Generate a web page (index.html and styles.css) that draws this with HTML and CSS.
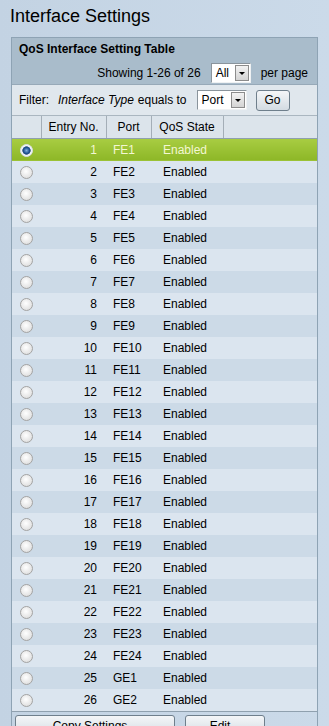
FILE: index.html
```html
<!DOCTYPE html>
<html>
	<head>
		<meta http-equiv="content-type" content="text/html; charset=utf-8" />
		<title>Interface Settings</title>
		<link rel="stylesheet" href="styles.css">
	</head>

	<body>
		<h1 class="page-title">Interface Settings</h1>

		<div class="panel">
			<div class="panel-head">
				<div class="panel-caption">QoS Interface Setting Table</div>
				<div class="paging">
					<span>Showing 1-26 of 26</span>
					<span class="select select-all"><span class="select-value">All</span><span class="select-arrow"></span></span>
					<span>per page</span>
				</div>
			</div>

			<div class="filter-bar">
				<span class="filter-label">Filter:</span>
				<span class="filter-field">Interface Type</span>
				<span>equals to</span>
				<span class="select select-port"><span class="select-value">Port</span><span class="select-arrow"></span></span>
				<button class="btn btn-go">Go</button>
			</div>

			<table class="qos-table">
				<thead>
					<tr>
						<th class="col-radio"></th>
						<th class="col-entry">Entry No.</th>
						<th class="col-port">Port</th>
						<th class="col-state">QoS State</th>
						<th class="col-rest"></th>
					</tr>
				</thead>
				<tbody id="qos-rows"></tbody>
			</table>

			<div class="actions">
				<button class="btn btn-copy">Copy Settings...</button>
				<button class="btn btn-edit">Edit...</button>
			</div>
		</div>

		<script type="text/javascript">
			"use strict";

			let rows = document.getElementById("qos-rows");
			let html = "";

			for (let i = 1; i <= 26; i++) {
				// FE1..FE24, then the two gigabit ports
				let port = i <= 24 ? "FE" + i : "GE" + (i - 24);
				let cls = i == 1 ? "selected" : (i % 2 == 0 ? "even" : "odd");

				html += '<tr class="' + cls + '">' +
				        '<td class="col-radio"><span class="radio"></span></td>' +
				        '<td class="col-entry">' + i + '</td>' +
				        '<td class="col-port">' + port + '</td>' +
				        '<td class="col-state">Enabled</td>' +
				        '<td class="col-rest"></td>' +
				        '</tr>';
			}

			rows.innerHTML = html;
		</script>
	</body>
</html>
```

FILE: styles.css
```css
body {
	margin: 0;
	height: 726px;
	overflow: hidden;
	background: linear-gradient(to right, #c3d3e3, #cbdae9);
	font-family: "Liberation Sans", Arial, sans-serif;
	font-size: 12px;
	color: #000;
}

.page-title {
	margin: 6px 0 0 10px;
	font-size: 18px;
	font-weight: normal;
	line-height: 21px;
}

.panel {
	margin: 10px 0 0 11px;
	width: 305px;
	border: 1px solid #8ea3b4;
	border-bottom: none;
}

/* caption + paging */
.panel-head {
	height: 47px;
	padding: 0 9px 0 7px;
	background: #a9bccb;
	box-sizing: border-box;
	border-bottom: 1px solid #97a9b8;
}

.panel-caption {
	padding-top: 4px;
	font-weight: bold;
	line-height: 14px;
}

.paging {
	display: flex;
	justify-content: flex-end;
	align-items: center;
	gap: 10px;
	margin-top: 7px;
	height: 20px;
}

/* fake select boxes */
.select {
	display: inline-flex;
	align-items: center;
	height: 20px;
	box-sizing: border-box;
	background: #fff;
	border: 1px solid;
	border-color: #8a949c #eef1f3 #eef1f3 #8a949c;
}

.select-value {
	flex: 1;
	padding-left: 4px;
}

.select-arrow {
	position: relative;
	width: 14px;
	height: 16px;
	margin-right: 1px;
	box-sizing: border-box;
	border: 1px solid #8c8c8c;
	background: linear-gradient(#f2f2f2, #d4d4d4);
}

.select-arrow::after {
	content: "";
	position: absolute;
	left: 3px;
	top: 6px;
	border-left: 3px solid transparent;
	border-right: 3px solid transparent;
	border-top: 3px solid #000;
}

.select-all {
	width: 40px;
}

.select-port {
	width: 50px;
	margin-left: 10px;
}

/* filter row */
.filter-bar {
	display: flex;
	align-items: center;
	height: 31px;
	padding-left: 7px;
	background: #e0e7ed;
	border-bottom: 1px solid #aab6c0;
	box-sizing: border-box;
}

.filter-label {
	margin-right: 9px;
}

.filter-field {
	font-style: italic;
	margin-right: 4px;
}

.btn {
	font-family: "Liberation Sans", Arial, sans-serif;
	font-size: 12px;
	color: #000;
	border: 1px solid #6f7f8c;
	border-radius: 3px;
	background: linear-gradient(#f4f6f8, #d3dbe2);
	padding: 0;
}

.btn-go {
	width: 34px;
	height: 21px;
	margin-left: 9px;
}

/* table */
.qos-table {
	width: 305px;
	border-collapse: collapse;
	table-layout: fixed;
}

.qos-table th {
	height: 22px;
	padding: 0;
	font-weight: normal;
	text-align: center;
	background: #dce4eb;
	border-left: 1px solid #a4aeb7;
	border-bottom: 1px solid #8fa0ae;
	box-sizing: border-box;
}

.qos-table th.col-radio {
	border-left: none;
}

.qos-table td {
	height: 22px;
	padding: 0;
	white-space: nowrap;
}

.col-radio { width: 29px; text-align: center; }
.col-entry { width: 65px; }
.col-port { width: 45px; }
.col-state { width: 72px; }

td.col-entry { text-align: right; padding-right: 9px !important; box-sizing: border-box; }
td.col-port { padding-left: 7px !important; }
td.col-state { padding-left: 12px !important; }

tr.even td { background: #dbe5ef; }
tr.odd td { background: #ccdae7; }

tr.selected td {
	background: linear-gradient(#a8cd42, #8db727);
	color: #f3f7d2;
}

.radio {
	display: inline-block;
	width: 11px;
	height: 11px;
	margin-top: 2px;
	vertical-align: middle;
	border: 1px solid #a3a3a3;
	border-radius: 50%;
	background: radial-gradient(circle at 45% 40%, #ffffff, #d6d6d6);
}

tr.selected .radio {
	border-color: #d8dee4;
	background: radial-gradient(circle at 50% 50%, #7fb0e0 0, #1e4f8e 3px, #1e4f8e 3.5px, #5f7c98 4px, #f2f5f8 4.5px);
}

/* bottom buttons */
.actions {
	display: flex;
	gap: 10px;
	padding: 3px 0 0 3px;
	border-top: 1px solid #8fa0ae;
}

.btn-copy {
	width: 160px;
	height: 22px;
}

.btn-edit {
	width: 80px;
	height: 22px;
}
```
